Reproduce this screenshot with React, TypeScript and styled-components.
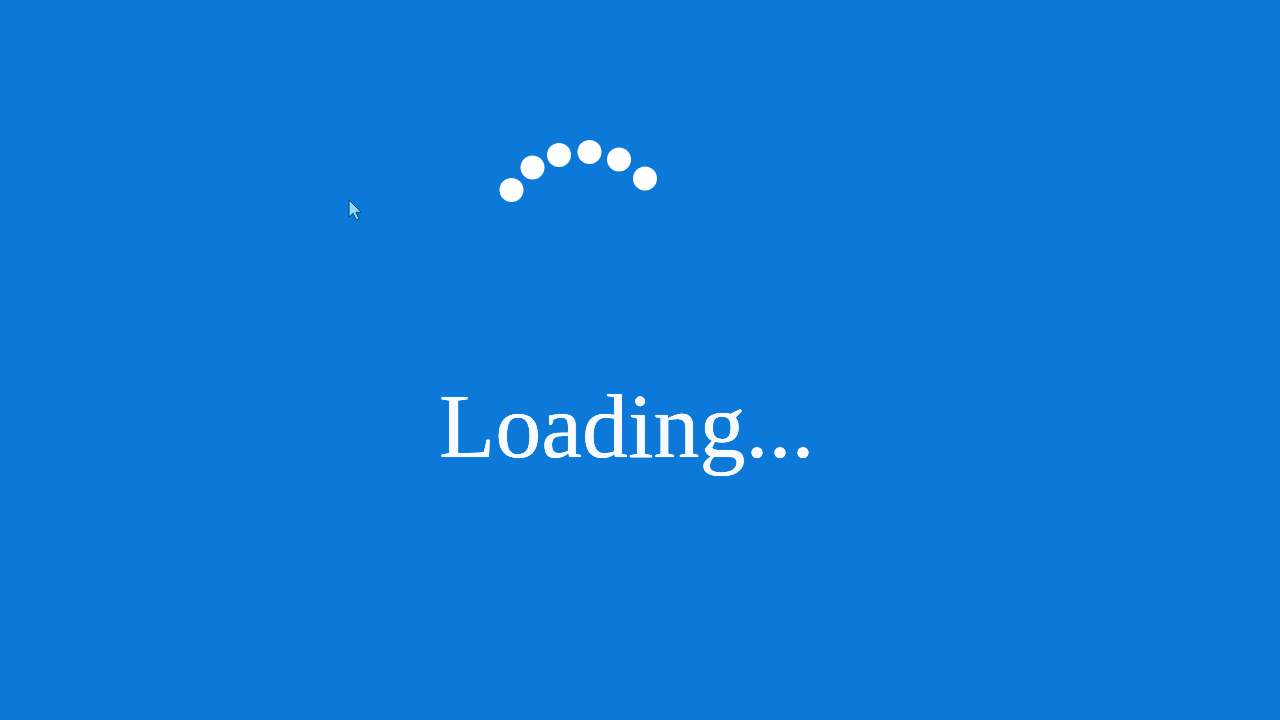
import React from "react";
import styled, { createGlobalStyle } from "styled-components";

const Global = createGlobalStyle`
  html, body { margin: 0; padding: 0; background: #0c78d8; }
  #root { min-height: 100vh; }
`;

const Screen = styled.main`
  position: relative;
  width: 100%;
  height: 100vh;
  overflow: hidden;
  background: #0c78d8;
  display: flex;
  flex-direction: column;
  align-items: flex-start;
  padding: 140px 0 0 439px;
  box-sizing: border-box;
`;

const Spinner = styled.svg`
  display: block;
  margin-left: 60px;
  width: 160px;
  height: 64px;
  overflow: visible;
`;

const Label = styled.h1`
  margin: 176px 0 0 0;
  font-family: "Liberation Serif", "Times New Roman", serif;
  font-weight: 400;
  font-size: 92px;
  line-height: 92px;
  color: #f7fbff;
  letter-spacing: 0;
  text-shadow: 0 0 0.6px #ffffff, 0 0 1px rgba(255, 255, 255, 0.6);
`;

const Cursor = styled.svg`
  position: absolute;
  left: 348px;
  top: 199px;
  width: 15px;
  height: 23px;
`;

const dots = [
  { x: 12.5, y: 50 },
  { x: 33.5, y: 27.5 },
  { x: 60, y: 15 },
  { x: 90.5, y: 12 },
  { x: 120, y: 19.5 },
  { x: 146, y: 38.5 },
];

export default function App() {
  return (
    <>
      <Global />
      <Screen>
        <Spinner viewBox="0 0 160 64">
          <defs>
            <filter id="glow" x="-50%" y="-50%" width="200%" height="200%">
              <feGaussianBlur stdDeviation="0.5" />
            </filter>
          </defs>
          {dots.map((d, i) => (
            <circle key={i} cx={d.x} cy={d.y} r={12} fill="#ffffff" filter="url(#glow)" />
          ))}
        </Spinner>
        <Label>Loading...</Label>
        <Cursor viewBox="0 0 15 23">
          <path
            d="M1 1 L1 18 L5.2 14.3 L8.3 21 L11 20 L8 13.3 L13.4 13.3 Z"
            fill="#8fdcf2"
            stroke="#08407c"
            strokeWidth="1"
            strokeLinejoin="round"
          />
        </Cursor>
      </Screen>
    </>
  );
}
